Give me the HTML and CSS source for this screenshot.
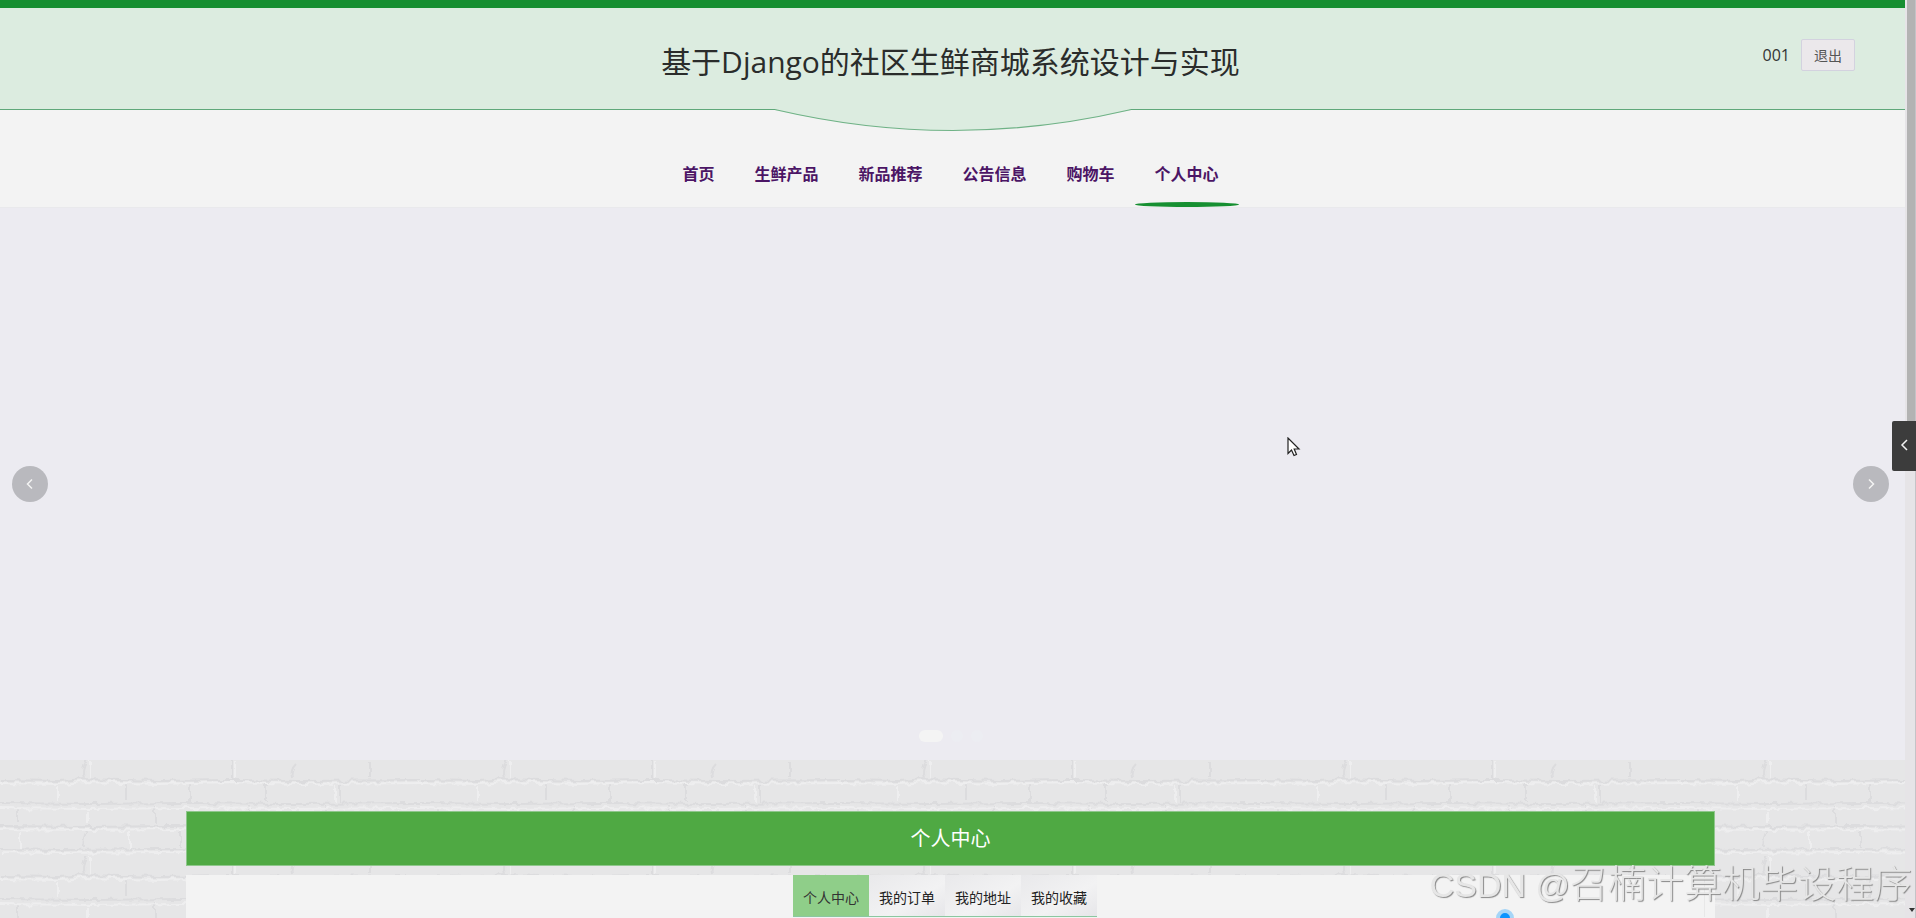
FILE: index.html
```
<!DOCTYPE html>
<html lang="zh-CN">

<head>
    <meta charset="utf-8">
    <title>个人中心</title>
    <link rel="stylesheet" href="styles.css">
</head>

<body>
    <div class="page">
        <header class="header">
            <h1>基于Django的社区生鲜商城系统设计与实现</h1>
            <div class="user">
                <span>001</span>
                <button type="button" class="logout">退出</button>
            </div>
            <svg class="curve" width="356" height="24" viewBox="0 0 356 24">
                <path d="M0 0H356V1.500L354 1.500Q178 41 2 1.500L0 1.500Z" fill="#dcece0"/>
                <path d="M0 0.500L2 1Q178 42 354 1L356 0.500" fill="none" stroke="#6fb286" stroke-width="1.200"/>
            </svg>
        </header>

        <nav class="nav">
            <a href="#">首页</a>
            <a href="#">生鲜产品</a>
            <a href="#">新品推荐</a>
            <a href="#">公告信息</a>
            <a href="#">购物车</a>
            <a href="#" class="active">个人中心</a>
        </nav>

        <section class="banner">
            <button type="button" class="arrow" aria-label="上一张">
                <svg width="12" height="12" viewBox="0 0 12 12"><path d="M8 1.500L3.500 6L8 10.500"/></svg>
            </button>
            <button type="button" class="arrow" aria-label="下一张">
                <svg width="12" height="12" viewBox="0 0 12 12"><path d="M4 1.500L8.500 6L4 10.500"/></svg>
            </button>
            <div class="dots"><i class="on"></i><i></i><i></i></div>
        </section>

        <div class="wall">
            <main class="main">
                <h2>个人中心</h2>
                <div class="panel">
                    <div class="tabs">
                        <a href="#" class="active">个人中心</a>
                        <a href="#">我的订单</a>
                        <a href="#">我的地址</a>
                        <a href="#">我的收藏</a>
                    </div>
                    <i class="marker"></i>
                </div>
            </main>
        </div>
    </div>

    <div class="scroll"><div class="thumb"></div><i class="down"></i></div>

    <button type="button" class="drawer" aria-label="展开">
        <svg width="12" height="12" viewBox="0 0 12 12"><path d="M9 1L4 6L9 11"/></svg>
    </button>

    <svg class="cursor" width="14" height="21" viewBox="0 0 14 21">
        <path d="M1 1V16.500L4.500 13L7 18.500L9.500 17.500L7.200 12H12Z" fill="#fff" stroke="#222" stroke-width="1.200"/>
    </svg>

    <div class="watermark"><span>CSDN @</span>召楠计算机毕设程序</div>
</body>

</html>
```
FILE: styles.css
```
* {
    box-sizing: border-box;
}
body {
    margin: 0;
    display: flex;
    min-height: 100vh;
    font-family: "Open Sans", "Noto Sans CJK SC", sans-serif;
    color: #333;
    background-color: #e6e5e7;
}
h1, h2 {
    margin: 0;
    font-weight: normal;
}
a {
    text-decoration: none;
}
button {
    padding: 0;
    font-family: inherit;
    cursor: pointer;
}

.page {
    flex: 1;
    min-width: 0;
    display: flex;
    flex-direction: column;
}

.header {
    position: relative;
    display: flex;
    justify-content: center;
    height: 110px;
    padding-right: 4px;
    border-top: 8px solid #168f31;
    border-bottom: 1px solid #5fa87a;
    background-color: #dcece0;
}
.header h1 {
    font-size: 30px;
    line-height: 108px;
    color: #2a2c2b;
}
.user {
    position: absolute;
    top: 31px;
    right: 50px;
    display: flex;
    align-items: center;
    gap: 11px;
    height: 32px;
    line-height: 32px;
    font-size: 16px;
}
.logout {
    width: 54px;
    height: 32px;
    border: 1px solid #d3d2df;
    border-radius: 2px;
    background-color: #ebe8eb;
    font-size: 14px;
    color: #555;
}
.curve {
    position: absolute;
    top: 100%;
    left: 50%;
    margin-left: -178px;
}

.nav {
    display: flex;
    justify-content: center;
    height: 98px;
    padding: 30px 4px 0 0;
    background-color: #f3f3f3;
    border-bottom: 1px solid #e9e9ec;
}
.nav a {
    position: relative;
    padding: 0 20px;
    line-height: 68px;
    font-size: 16px;
    font-weight: bold;
    color: #4b1565;
}
.nav .active::after {
    content: "";
    position: absolute;
    left: 0;
    right: 0;
    bottom: 0;
    height: 5px;
    border-radius: 50%;
    background-color: #168f31;
}

.banner {
    position: relative;
    display: flex;
    justify-content: space-between;
    align-items: center;
    height: 552px;
    padding: 0 16px 0 12px;
    background-color: #ecebf1;
}
.arrow {
    display: flex;
    justify-content: center;
    align-items: center;
    width: 36px;
    height: 36px;
    border: 0;
    border-radius: 50%;
    background-color: #b9b9be;
}
.arrow path, .drawer path {
    fill: none;
    stroke: #f3f3f3;
    stroke-width: 1.5;
}
.dots {
    position: absolute;
    left: 0;
    right: 4px;
    bottom: 18px;
    display: flex;
    justify-content: center;
    gap: 8px;
}
.dots i {
    width: 12px;
    height: 12px;
    border-radius: 6px;
    background-color: #ecedf2;
}
.dots .on {
    width: 24px;
    background-color: #f4f4f4;
}

/* pale brick wall behind the content */
.wall {
    flex: 1;
    display: flex;
    padding-right: 4px;
    background-color: #e6e6e7;
    background-image: url("data:image/svg+xml,%3Csvg xmlns='http://www.w3.org/2000/svg' width='420' height='96'%3E%3Cfilter id='b'%3E%3CfeTurbulence type='fractalNoise' baseFrequency='.12' numOctaves='2' seed='4'/%3E%3CfeDisplacementMap in='SourceGraphic' scale='7'/%3E%3CfeGaussianBlur stdDeviation='.7'/%3E%3C/filter%3E%3Cg fill='none' stroke-width='2' filter='url(%23b)'%3E%3Cpath stroke='%23dcdcde' d='M0 20L60 21L84 19L160 21L230 20L300 21L420 20M0 43L90 44L180 43L290 44L420 43M0 66L88 67L170 66L280 67L420 66M0 89L60 90L160 89L300 90L420 89M87 0Q81 9 84 18M232 0V18M296 4Q290 10 292 18M370 2V18M126 23V40M190 23V42M266 24V41M340 23V42M18 48V62M155 46V63M250 46V64M326 46V64M88 69Q82 78 84 87M180 69V87M310 69V87'/%3E%3Cpath stroke='%23eeeeef' d='M0 23L60 24L84 22L160 24L230 22L300 24L420 23M0 48L90 49L180 48L290 49L420 48M0 69L88 70L170 69L280 70L420 69M0 92L60 93L160 92L300 93L420 92M90 1V17M235 1V18M58 26V41M335 26V41M88 51V64M400 51V64M20 72V88M130 72V88'/%3E%3C/g%3E%3C/svg%3E");
}
.main {
    display: flex;
    flex-direction: column;
    width: 80.4%;
    margin: 0 auto;
    padding-top: 51px;
}
.main h2 {
    height: 55px;
    margin-bottom: 9px;
    border: 1px solid #8fc78c;
    background-color: #4fa943;
    line-height: 53px;
    font-size: 20px;
    text-align: center;
    color: #fff;
}
.panel {
    position: relative;
    flex: 1;
    overflow: hidden;
    padding-right: 10px;
    background-color: #f3f3f3;
}
.tabs {
    display: flex;
    justify-content: center;
    border-right: 1px solid #e8e8e8;
}
.tabs a {
    height: 42px;
    padding: 0 10px;
    border-bottom: 1px solid #8cc7a0;
    background-image: linear-gradient(150deg, #e9e9eb, #f2f2f3 60%, #e6e6e9);
    line-height: 46px;
    font-size: 14px;
    color: #222;
}
.tabs .active {
    background: #8fce89;
    color: #333;
}
.marker {
    position: absolute;
    top: 34px;
    right: 201px;
    width: 18px;
    height: 18px;
    border: 4px solid #a5d5f7;
    border-radius: 50%;
    background-color: #0a94ff;
}

.scroll {
    position: relative;
    width: 11px;
    padding-left: 2px;
    border-right: 1px solid #c4c3c7;
    background-color: #e6e4e7;
}
.thumb {
    height: 48vh;
    background-color: #b3b3b3;
}
.down {
    position: absolute;
    right: 0;
    bottom: 6px;
    border: 3px solid transparent;
    border-top: 4px solid #333;
    border-bottom: 0;
}
.drawer {
    position: fixed;
    top: 421px;
    right: 0;
    width: 24px;
    height: 50px;
    border: 0;
    border-radius: 2px 0 0 2px;
    background-color: #3c3c3c;
}
.cursor {
    position: fixed;
    top: 437px;
    left: 1287px;
}
.watermark {
    position: fixed;
    right: 4px;
    bottom: 5px;
    line-height: 56px;
    font-family: "Liberation Sans", "Noto Sans CJK SC", sans-serif;
    font-size: 38px;
    font-weight: 300;
    color: #e6e6e6;
    text-shadow: 1px 1px 1px #888;
}
.watermark span {
    font-size: 34px;
}
```
